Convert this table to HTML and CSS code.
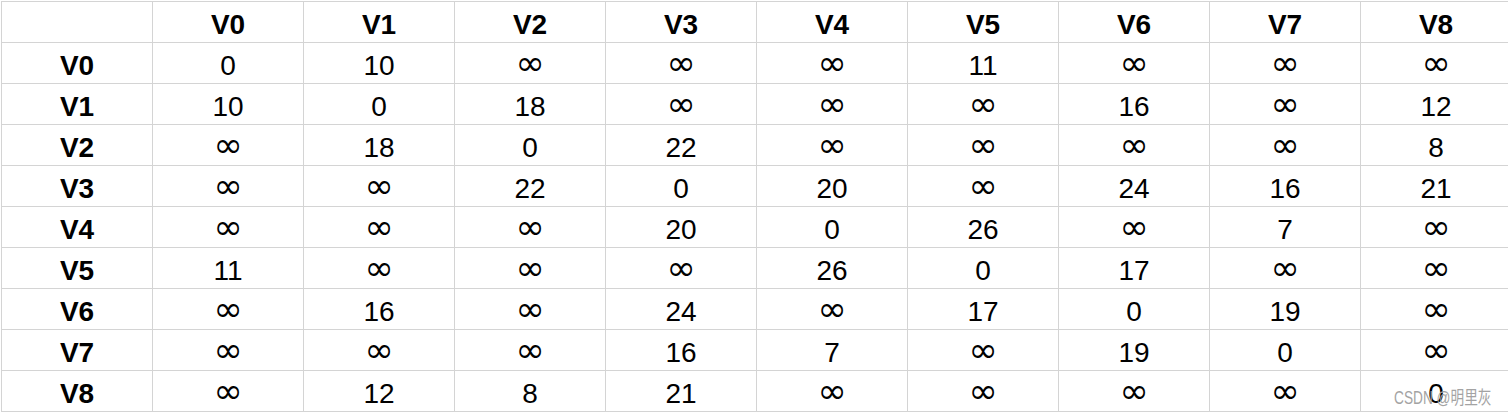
FILE: index.html
```html
<!DOCTYPE html>
<html>
<head>
<meta charset="utf-8">
<link rel="stylesheet" href="styles.css">
</head>
<body>
<div class="sheet">
  <div class="grid">
    <div class="c"></div><div class="c h">V0</div><div class="c h">V1</div><div class="c h">V2</div><div class="c h">V3</div><div class="c h">V4</div><div class="c h">V5</div><div class="c h">V6</div><div class="c h">V7</div><div class="c h">V8</div>
    <div class="c h">V0</div><div class="c">0</div><div class="c">10</div><div class="c inf">∞</div><div class="c inf">∞</div><div class="c inf">∞</div><div class="c">11</div><div class="c inf">∞</div><div class="c inf">∞</div><div class="c inf">∞</div>
    <div class="c h">V1</div><div class="c">10</div><div class="c">0</div><div class="c">18</div><div class="c inf">∞</div><div class="c inf">∞</div><div class="c inf">∞</div><div class="c">16</div><div class="c inf">∞</div><div class="c">12</div>
    <div class="c h">V2</div><div class="c inf">∞</div><div class="c">18</div><div class="c">0</div><div class="c">22</div><div class="c inf">∞</div><div class="c inf">∞</div><div class="c inf">∞</div><div class="c inf">∞</div><div class="c">8</div>
    <div class="c h">V3</div><div class="c inf">∞</div><div class="c inf">∞</div><div class="c">22</div><div class="c">0</div><div class="c">20</div><div class="c inf">∞</div><div class="c">24</div><div class="c">16</div><div class="c">21</div>
    <div class="c h">V4</div><div class="c inf">∞</div><div class="c inf">∞</div><div class="c inf">∞</div><div class="c">20</div><div class="c">0</div><div class="c">26</div><div class="c inf">∞</div><div class="c">7</div><div class="c inf">∞</div>
    <div class="c h">V5</div><div class="c">11</div><div class="c inf">∞</div><div class="c inf">∞</div><div class="c inf">∞</div><div class="c">26</div><div class="c">0</div><div class="c">17</div><div class="c inf">∞</div><div class="c inf">∞</div>
    <div class="c h">V6</div><div class="c inf">∞</div><div class="c">16</div><div class="c inf">∞</div><div class="c">24</div><div class="c inf">∞</div><div class="c">17</div><div class="c">0</div><div class="c">19</div><div class="c inf">∞</div>
    <div class="c h">V7</div><div class="c inf">∞</div><div class="c inf">∞</div><div class="c inf">∞</div><div class="c">16</div><div class="c">7</div><div class="c inf">∞</div><div class="c">19</div><div class="c">0</div><div class="c inf">∞</div>
    <div class="c h">V8</div><div class="c inf">∞</div><div class="c">12</div><div class="c">8</div><div class="c">21</div><div class="c inf">∞</div><div class="c inf">∞</div><div class="c inf">∞</div><div class="c inf">∞</div><div class="c">0</div>
  </div>
  <div class="watermark">CSDN @明里灰</div>
</div>
</body>
</html>
```
FILE: styles.css
```css
html, body {
  margin: 0;
  padding: 0;
  background: #ffffff;
  overflow: hidden;
}
.sheet {
  position: relative;
  width: 1508px;
  height: 412px;
  overflow: hidden;
  padding: 1px 0 0 1px;
  box-sizing: border-box;
}
.grid {
  display: grid;
  grid-template-columns: repeat(10, 150px);
  grid-auto-rows: 40px;
  gap: 1px;
  padding: 1px;
  background: #d4d4d4;
  width: max-content;
}
.c {
  background: #ffffff;
  display: flex;
  align-items: flex-end;
  justify-content: center;
  padding-bottom: 3px;
  box-sizing: border-box;
  font-family: "Liberation Sans", Arial, sans-serif;
  font-size: 28px;
  line-height: 28px;
  color: #000000;
}
.h {
  font-weight: bold;
}
.inf {
  font-family: "DejaVu Sans", sans-serif;
  font-size: 35px;
  padding-bottom: 6px;
}
.watermark {
  position: absolute;
  left: 1394px;
  top: 387px;
  font-family: "Liberation Sans", "Noto Sans CJK SC", sans-serif;
  font-size: 18px;
  line-height: 22px;
  color: #a3a3a3;
  white-space: nowrap;
  transform: scaleX(0.76);
  transform-origin: left top;
}
```
